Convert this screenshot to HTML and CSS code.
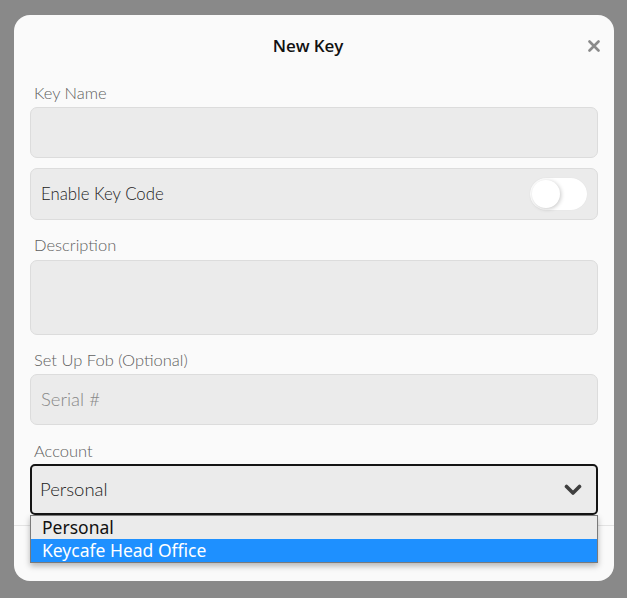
FILE: index.html
```html
<!DOCTYPE html>
<html>
<head>
<meta charset="utf-8">
<link rel="stylesheet" href="styles.css">
</head>
<body>
<div class="modal">
  <div class="modal-header">
    <h1 class="title">New Key</h1>
    <span class="close">
      <svg width="12" height="12" viewBox="0 0 12 12"><path d="M1.5 1.5 L10.5 10.5 M10.5 1.5 L1.5 10.5" stroke="#8a8a8a" stroke-width="2.6" stroke-linecap="round"/></svg>
    </span>
  </div>
  <div class="modal-body">
    <label class="label first">Key Name</label>
    <div class="input"></div>
    <div class="toggle-row">
      <span class="toggle-text">Enable Key Code</span>
      <span class="toggle"><span class="knob"></span></span>
    </div>
    <label class="label desc">Description</label>
    <div class="input textarea"></div>
    <label class="label fob">Set Up Fob (Optional)</label>
    <div class="input"><span class="placeholder">Serial #</span></div>
    <label class="label account">Account</label>
    <div class="select-wrap">
      <div class="select">
        <span class="select-value">Personal</span>
        <svg class="chevron" width="18" height="12" viewBox="0 0 18 12"><path d="M2.5 2.5 L9 9 L15.5 2.5" fill="none" stroke="#3f3f3f" stroke-width="3.6" stroke-linecap="round" stroke-linejoin="round"/></svg>
      </div>
      <div class="dropdown">
        <div class="option">Personal</div>
        <div class="option active">Keycafe Head Office</div>
      </div>
    </div>
  </div>
  <div class="modal-footer">
    <span class="footer-btn">Add Key</span>
  </div>
</div>
</body>
</html>
```
FILE: styles.css
```css
* { box-sizing: border-box; }
html, body { margin: 0; padding: 0; }
body {
  background: #898989;
  width: 627px;
  height: 598px;
  padding: 15px 13px 0 14px;
  font-family: "Lato", "Open Sans", sans-serif;
}
.modal {
  width: 600px;
  height: 566px;
  background: #fafafa;
  border-radius: 16px;
  display: flex;
  flex-direction: column;
}
.modal-header {
  position: relative;
  height: 68px;
  display: flex;
  justify-content: center;
  padding-top: 19px;
  padding-right: 12px;
}
.title {
  margin: 0;
  font-family: "Open Sans", sans-serif;
  font-weight: 600;
  font-size: 17px;
  line-height: 24px;
  color: #111;
  letter-spacing: -0.1px;
}
.close {
  position: absolute;
  right: 14px;
  top: 25px;
  width: 12px;
  height: 12px;
  display: flex;
}
.modal-body {
  padding: 0 16px;
  display: flex;
  flex-direction: column;
  flex: 1;
}
.label {
  display: block;
  font-size: 16.5px;
  font-weight: 300;
  line-height: 20px;
  color: #5e5e5e;
  margin: 15px 0 5px 4px;
}
.label.first { margin-top: 0; margin-bottom: 4px; }
.label.fob { margin-bottom: 4px; }
.label.account { margin-top: 16px; margin-bottom: 3px; }
.input {
  height: 51px;
  background: #ebebeb;
  border: 1px solid #dcdcdc;
  border-radius: 7px;
  display: flex;
  align-items: center;
  padding: 0 10px;
}
.textarea { height: 75px; }
.placeholder {
  font-size: 18.5px;
  font-weight: 300;
  color: #888;
}
.toggle-row {
  margin-top: 10px;
  height: 52px;
  background: #ebebeb;
  border: 1px solid #dcdcdc;
  border-radius: 7px;
  display: flex;
  align-items: center;
  justify-content: space-between;
  padding: 0 10px;
}
.toggle-text {
  font-size: 16.8px;
  font-weight: 300;
  color: #222;
}
.toggle {
  width: 57px;
  height: 32px;
  border-radius: 16px;
  background: #fff;
  box-shadow: 0 0 1px rgba(0,0,0,0.08);
  display: flex;
  align-items: center;
  padding-left: 2px;
}
.knob {
  width: 28px;
  height: 28px;
  border-radius: 50%;
  background: #fff;
  box-shadow: 1px 1px 4px rgba(0,0,0,0.22);
}
.select-wrap { position: relative; }
.select {
  height: 51px;
  background: #ebebeb;
  border: 2px solid #141414;
  border-radius: 5px;
  display: flex;
  align-items: center;
  justify-content: space-between;
  padding: 0 14px 0 8px;
}
.select-value {
  font-size: 18.5px;
  font-weight: 300;
  color: #222;
}
.chevron { margin-top: 1px; }
.dropdown {
  position: absolute;
  left: 0;
  right: 0;
  top: 51px;
  background: #ebebeb;
  border: 1px solid #7a7a7a;
  box-shadow: 0 3px 6px rgba(0,0,0,0.28);
  z-index: 2;
  font-family: "Noto Sans", "Open Sans", sans-serif;
}
.option {
  height: 23px;
  line-height: 23px;
  font-size: 17.5px;
  padding-left: 11px;
  color: #111;
}
.option.active {
  background: #1e90ff;
  color: #fff;
}
.modal-footer {
  margin-top: 10px;
  border-top: 1px solid #e3e3e3;
  height: 57px;
  display: flex;
  align-items: center;
  justify-content: center;
}
.footer-btn {
  font-size: 17px;
  color: #1a8fc4;
  font-weight: 600;
}
```
